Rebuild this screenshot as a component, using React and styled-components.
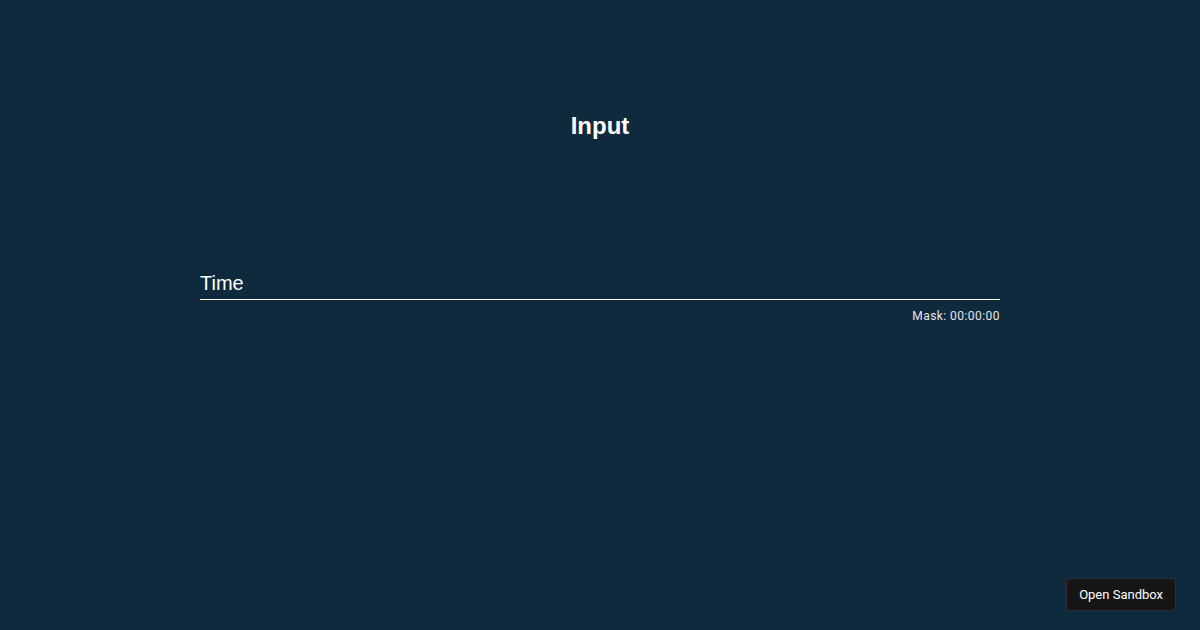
import React from "react";
import styled, { createGlobalStyle } from "styled-components";

const GlobalStyle = createGlobalStyle`
  html, body {
    margin: 0;
    padding: 0;
    background: #0f293d;
    font-family: "Liberation Sans", Arial, sans-serif;
  }
`;

const Page = styled.div`
  width: 1200px;
  height: 630px;
  background: #0f293d;
  color: #ffffff;
  display: flex;
  flex-direction: column;
  align-items: center;
  position: relative;
`;

const Title = styled.h1`
  margin: 112px 0 0;
  font-size: 24px;
  font-weight: bold;
  line-height: 28px;
`;

const Field = styled.div`
  width: 800px;
  margin-top: 126px;
  display: flex;
  flex-direction: column;
`;

const TextInput = styled.input`
  box-sizing: content-box;
  background: transparent;
  border: none;
  border-bottom: 1px solid #ffffff;
  color: #ffffff;
  font-family: "Liberation Sans", Arial, sans-serif;
  font-size: 20px;
  padding: 2px 0 1px;
  height: 30px;
  outline: none;
  &::placeholder {
    color: #ffffff;
  }
`;

const Hint = styled.div`
  align-self: flex-end;
  margin-top: 9px;
  font-family: Roboto, "Liberation Sans", sans-serif;
  font-size: 12px;
  letter-spacing: 0.45px;
  color: #e8e8e8;
`;

const SandboxButton = styled.button`
  position: absolute;
  right: 24px;
  bottom: 19px;
  height: 33px;
  padding: 0 12px;
  background: #151515;
  border: 1px solid #2e2e2e;
  border-radius: 4px;
  color: #ffffff;
  font-family: Roboto, "Liberation Sans", sans-serif;
  font-size: 13px;
`;

export default function App() {
  return (
    <>
      <GlobalStyle />
      <Page>
        <Title>Input</Title>
        <Field>
          <TextInput placeholder="Time" />
          <Hint>Mask: 00:00:00</Hint>
        </Field>
        <SandboxButton>Open Sandbox</SandboxButton>
      </Page>
    </>
  );
}
